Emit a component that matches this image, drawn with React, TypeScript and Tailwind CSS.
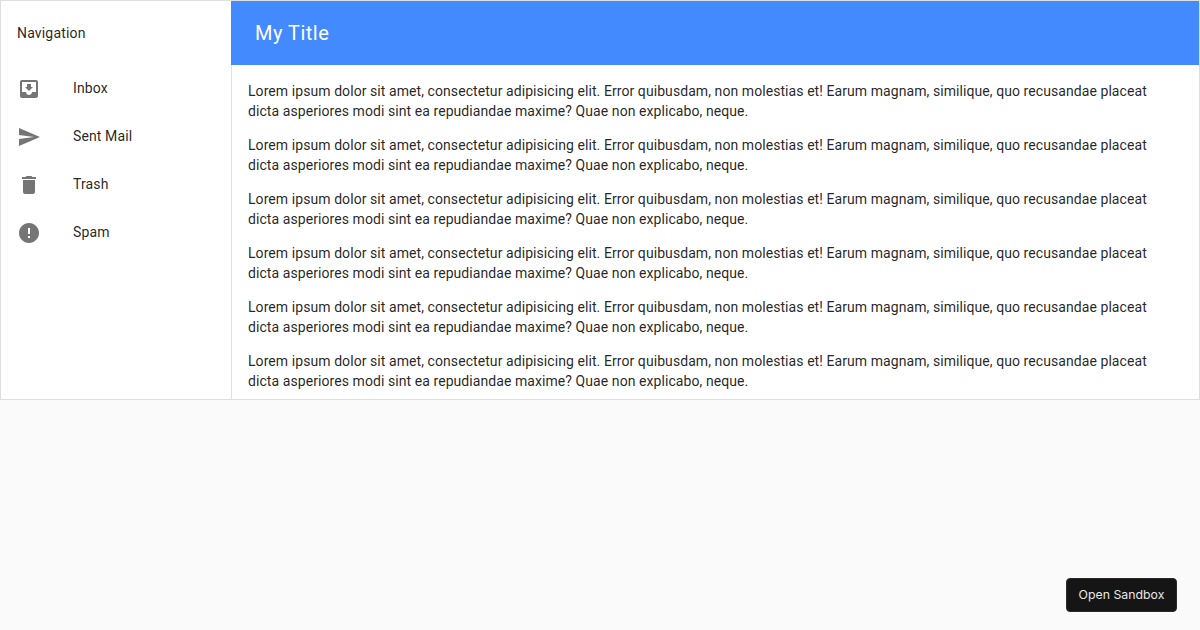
const LOREM = "Lorem ipsum dolor sit amet, consectetur adipisicing elit. Error quibusdam, non molestias et! Earum magnam, similique, quo recusandae placeat dicta asperiores modi sint ea repudiandae maxime? Quae non explicabo, neque.";

const items = [
  { label: "Inbox", d: "M19 3H4.99c-1.11 0-1.98.89-1.98 2L3 19c0 1.1.88 2 1.99 2H19c1.1 0 2-.9 2-2V5c0-1.11-.9-2-2-2zm0 12h-4c0 1.66-1.35 3-3 3s-3-1.34-3-3H4.99V5H19v10zm-3-5h-2V7h-4v3H8l4 4 4-4z" },
  { label: "Sent Mail", d: "M2.01 21L23 12 2.01 3 2 10l15 2-15 2z" },
  { label: "Trash", d: "M6 19c0 1.1.9 2 2 2h8c1.1 0 2-.9 2-2V7H6v12zM19 4h-3.5l-1-1h-5l-1 1H5v2h14V4z" },
  { label: "Spam", d: "M12 2C6.48 2 2 6.48 2 12s4.48 10 10 10 10-4.48 10-10S17.52 2 12 2zm1 15h-2v-2h2v2zm0-4h-2V7h2v6z" },
];

export default function App() {
  return (
    <div className="h-[630px] w-[1200px] bg-[#fafafa] relative font-['Roboto',sans-serif] overflow-hidden">
      <div className="h-[400px] flex border border-[#dedede] bg-white">
        <aside className="w-[231px] shrink-0 border-r border-[#e0e0e0] flex flex-col">
          <div className="h-16 flex items-center pl-4 text-sm tracking-[0.17px] text-[rgba(0,0,0,0.87)]">Navigation</div>
          <nav>
            {items.map((i) => (
              <div key={i.label} className="h-12 flex items-center pl-4">
                <svg viewBox="0 0 24 24" className="w-6 h-6 fill-[#757575] shrink-0"><path d={i.d} /></svg>
                <span className="ml-8 text-sm tracking-[0.12px] leading-[18px] pb-0.5 text-[rgba(0,0,0,0.87)]">{i.label}</span>
              </div>
            ))}
          </nav>
        </aside>
        <main className="flex-1 min-w-0 flex flex-col">
          <header className="h-16 -ml-px bg-[#448aff] flex items-center pl-6 text-white text-xl tracking-[0.5px]">My Title</header>
          <div className="flex-1 overflow-hidden pl-4 pr-10 pt-4">
            {Array.from({ length: 6 }).map((_, i) => (
              <p key={i} className="text-sm leading-5 mb-3.5 tracking-[0.073px] text-[rgba(0,0,0,0.87)]">{LOREM}</p>
            ))}
          </div>
        </main>
      </div>
      <div className="absolute left-[1066px] top-[578px] w-[111px] h-[34px] rounded bg-[#151515] border border-[#2a2a2a] text-[#e8e8e8] text-[12.3px] flex items-center justify-center font-['Inter',sans-serif]">Open Sandbox</div>
    </div>
  );
}
